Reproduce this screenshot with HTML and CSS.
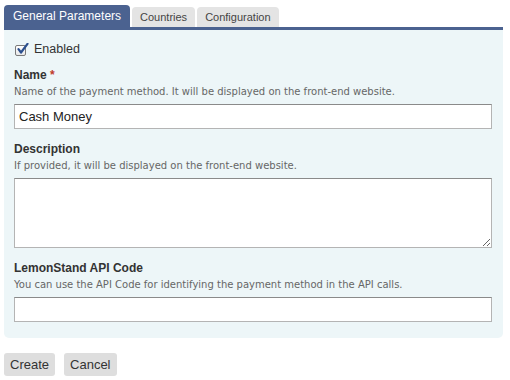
FILE: index.html
```html
<!DOCTYPE html>
<html lang="en">
<head>
  <meta charset="UTF-8" />
  <title>Payment Method</title>
  <link rel="stylesheet" href="styles.css">
</head>
<body>

  <!-- Tabs -->
  <ul class="tabs">
    <li class="tab active">General Parameters</li>
    <li class="tab">Countries</li>
    <li class="tab">Configuration</li>
  </ul>

  <!-- Tab panel -->
  <div class="panel">
    <label class="check">
      <span class="box">
        <svg width="13" height="12" viewBox="0 0 13 12">
          <path d="M2.5 6.2 L5 9.5 L11.5 0.8" fill="none" stroke="#2b4f8e" stroke-width="2.2" stroke-linecap="round" stroke-linejoin="round"/>
        </svg>
      </span>
      <span>Enabled</span>
    </label>

    <div class="field">
      <div class="label">Name <span class="req">*</span></div>
      <div class="hint">Name of the payment method. It will be displayed on the front-end website.</div>
      <input type="text" class="text" value="Cash Money" />
    </div>

    <div class="field">
      <div class="label">Description</div>
      <div class="hint">If provided, it will be displayed on the front-end website.</div>
      <textarea class="text area"></textarea>
    </div>

    <div class="field">
      <div class="label">LemonStand API Code</div>
      <div class="hint">You can use the API Code for identifying the payment method in the API calls.</div>
      <input type="text" class="text" />
    </div>
  </div>

  <div class="actions">
    <button>Create</button>
    <button>Cancel</button>
  </div>

</body>
</html>
```

FILE: styles.css
```css
body {
  margin: 0;
  padding: 5px 7px 0 4px;
  background: #fff;
  font-family: "Liberation Sans", Arial, sans-serif;
  color: #222;
}
.tabs {
  display: flex;
  align-items: flex-end;
  gap: 2px;
  list-style: none;
  margin: 0;
  padding: 0;
  border-bottom: 3px solid #4b6290;
}
.tab {
  height: 20px;
  line-height: 20px;
  padding: 0 8px;
  font-size: 11px;
  color: #444;
  background: #e4e4e4;
  border-radius: 4px 4px 0 0;
}
.tab.active {
  height: 22px;
  line-height: 23px;
  padding: 0 9px;
  font-size: 12px;
  color: #fff;
  background: #4b6290;
}
.panel {
  background: #edf6f8;
  border-radius: 0 0 5px 5px;
  padding: 11px 11px 16px 10px;
}
.check {
  display: flex;
  align-items: center;
  gap: 8px;
  font-size: 12.5px;
  color: #333;
  height: 16px;
}
.box {
  position: relative;
  box-sizing: border-box;
  width: 11px;
  height: 11px;
  margin: 2px 0 0 1px;
  border: 1px solid #7a7a7a;
  border-radius: 2px;
  background: linear-gradient(#fff, #e8e8e8);
}
.box svg {
  position: absolute;
  left: 0;
  top: -3px;
}
.field {
  margin-top: 11px;
}
.field + .field {
  margin-top: 13px;
}
.label {
  font-size: 12px;
  font-weight: bold;
  color: #333;
  line-height: 15px;
}
.req {
  color: #c0392b;
}
.hint {
  font-family: "DejaVu Sans", Verdana, sans-serif;
  font-size: 10px;
  color: #666;
  line-height: 14px;
  margin-top: 2px;
  margin-bottom: 5px;
}
.text {
  display: block;
  box-sizing: border-box;
  width: 100%;
  height: 25px;
  margin: 0;
  padding: 2px 4px;
  border: 1px solid #b4b4b4;
  border-top-color: #8a8a8a;
  background: #fff;
  font-family: "Liberation Sans", Arial, sans-serif;
  font-size: 13px;
  color: #222;
}
.area {
  height: 70px;
  resize: vertical;
}
.actions {
  display: flex;
  gap: 9px;
  margin-top: 15px;
}
button {
  height: 23px;
  padding: 0 6px;
  border: none;
  border-radius: 3px;
  background: #dedede;
  font-family: "Liberation Sans", Arial, sans-serif;
  font-size: 13px;
  color: #333;
}
```
